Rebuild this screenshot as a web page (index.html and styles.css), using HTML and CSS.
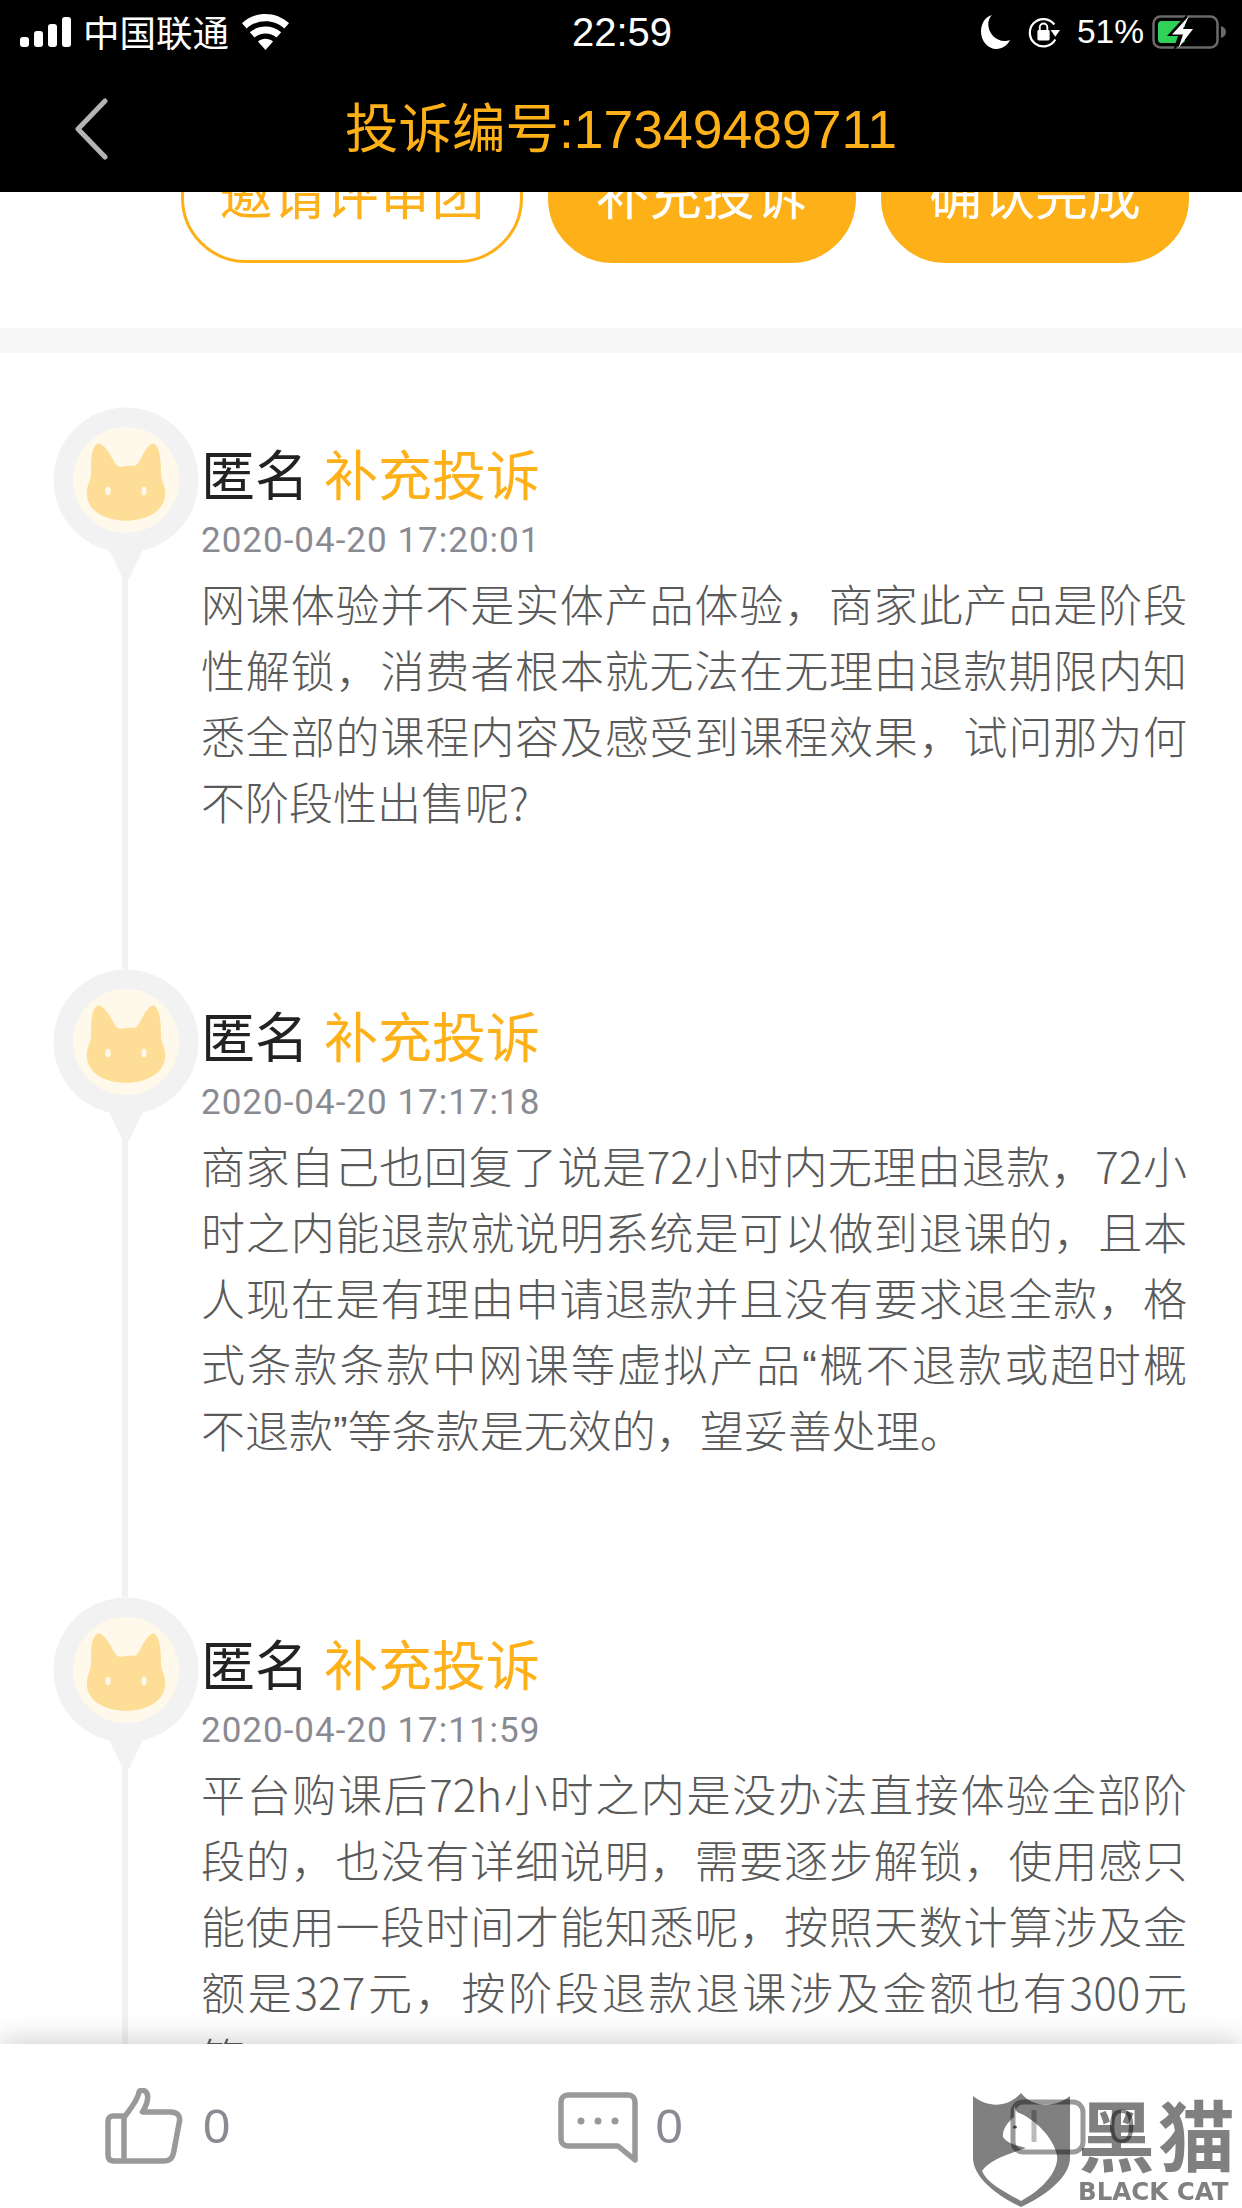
FILE: index.html
```html
<!DOCTYPE html>
<html lang="zh-CN">
<head>
  <meta charset="UTF-8">
  <meta name="viewport" content="width=device-width, initial-scale=1.0">
  <title>投诉详情</title>
  <link rel="stylesheet" href="styles.css">
</head>
<body>
  <svg class="defs" width="0" height="0">
    <symbol id="cat-pin" viewBox="0 0 146 172">
      <circle cx="73" cy="73" r="72.500" fill="#f2f2f2"/>
      <path d="M55 141L70 172h6l15-31z" fill="#f2f2f2"/>
      <circle cx="73" cy="73" r="53" fill="#fff9ec"/>
      <g transform="translate(73 75) scale(1.060) translate(-71 -73.500)">
        <path d="M45 37C50 38 54 44 58 51C61 57 63 59 66 59L76 58C80 59 82 57 85 51C89 44 92 38 97 37C103 40 104 52 104 66C104 72 108 76 108 84C108 100 92 110 71 110C50 110 34 100 34 84C34 76 38 72 38 66C38 52 38 40 45 37Z" fill="#fedd96"/>
        <ellipse cx="54" cy="82" rx="2.500" ry="4" fill="#fff9ec"/>
        <ellipse cx="88" cy="82" rx="2.500" ry="4" fill="#fff9ec"/>
      </g>
    </symbol>
  </svg>

  <div class="page">
    <header class="top">
      <div class="status-bar">
        <div class="status-left">
          <svg class="signal" width="52" height="30" viewBox="0 0 52 30">
            <rect x="0" y="20" width="9" height="10" rx="3"/>
            <rect x="14" y="14" width="9" height="16" rx="3"/>
            <rect x="28" y="7" width="9" height="23" rx="3"/>
            <rect x="42" y="0" width="9" height="30" rx="3"/>
          </svg>
          <span class="carrier">中国联通</span>
          <svg class="wifi" width="47" height="36" viewBox="0 0 47 36">
            <path d="M23.5 36l-7.5-8.5c4.200-3.600 10.800-3.600 15 0z"/>
            <path d="M12.500 23.500l-4.700-5.300c8.700-7.500 22.700-7.500 31.400 0l-4.700 5.300c-6.200-5.200-15.800-5.200-22 0z"/>
            <path d="M4.700 14.500L0 9.300c13-12.400 34-12.400 47 0l-4.700 5.200c-10.500-9.700-27.100-9.700-37.600 0z"/>
          </svg>
        </div>
        <div class="time">22:59</div>
        <div class="status-right">
          <svg width="29" height="34" viewBox="0 0 32 34" preserveAspectRatio="none">
            <path d="M12 0C4.500 2 0 8.700 0 16.500 0 26 7.500 34 17 34c6.500 0 12-3.500 15-9-2 .8-4 1-6 1C16 26 8 18 8 9c0-3 1.200-6.300 4-9z" fill="#fff"/>
          </svg>
          <svg class="lock" width="32" height="34" viewBox="0 0 34 34">
            <path d="M28 9A14.500 14.500 0 1 0 29 25" fill="none" stroke="#fff" stroke-width="2.400"/>
            <path d="M24 15h10l-5 7z" fill="#fff"/>
            <rect x="10" y="15" width="13" height="11" rx="1.500" fill="#fff"/>
            <path d="M12.500 15v-3a4 4 0 0 1 8 0v3" fill="none" stroke="#fff" stroke-width="2"/>
          </svg>
          <span class="battery-pct">51%</span>
          <svg width="75" height="34" viewBox="0 0 75 34">
            <rect x="1.500" y="1.500" width="64" height="31" rx="7" fill="none" stroke="#6a6a6a" stroke-width="2.500"/>
            <rect x="6" y="6" width="27" height="22" rx="3.500" fill="#30d158"/>
            <path d="M69 11c3 1 5 3 5 6s-2 5-5 6z" fill="#6a6a6a"/>
            <path d="M36 -2L15 21h11l-5 15 23-24H32z" fill="#000"/>
            <path d="M37 1L20 19.500h11L26.500 33 41 14H31z" fill="#fff"/>
          </svg>
        </div>
      </div>
      <div class="nav-bar">
        <svg class="back" width="35" height="62" viewBox="0 0 35 62">
          <path d="M31 3L4 31l27 28" fill="none" stroke="#b4b4b4" stroke-width="5" stroke-linecap="round" stroke-linejoin="round"/>
        </svg>
        <h1 class="nav-title">投诉编号:17349489711</h1>
      </div>
    </header>

    <main class="scroll-view">
      <div class="scroll-inner">
        <div class="actions">
          <button class="btn btn-outline">邀请评审团</button>
          <button class="btn btn-fill">补充投诉</button>
          <button class="btn btn-fill">确认完成</button>
        </div>
        <div class="divider"></div>

        <section class="timeline">
          <article class="entry">
            <div class="rail">
              <svg class="pin" width="146" height="172"><use href="#cat-pin"/></svg>
              <div class="rail-line"></div>
            </div>
            <div class="entry-body">
              <div class="entry-head">匿名 <span class="entry-type">补充投诉</span></div>
              <div class="entry-date">2020-04-20 17:20:01</div>
              <div class="entry-text">
                <span class="line">网课体验并不是实体产品体验，商家此产品是阶段</span>
                <span class="line">性解锁，消费者根本就无法在无理由退款期限内知</span>
                <span class="line">悉全部的课程内容及感受到课程效果，试问那为何</span>
                <span class="line line-end">不阶段性出售呢?</span>
              </div>
            </div>
          </article>

          <article class="entry">
            <div class="rail">
              <svg class="pin" width="146" height="172"><use href="#cat-pin"/></svg>
              <div class="rail-line"></div>
            </div>
            <div class="entry-body">
              <div class="entry-head">匿名 <span class="entry-type">补充投诉</span></div>
              <div class="entry-date">2020-04-20 17:17:18</div>
              <div class="entry-text">
                <span class="line">商家自己也回复了说是72小时内无理由退款，72小</span>
                <span class="line">时之内能退款就说明系统是可以做到退课的，且本</span>
                <span class="line">人现在是有理由申请退款并且没有要求退全款，格</span>
                <span class="line">式条款条款中网课等虚拟产品<span class="quote">“</span>概不退款或超时概</span>
                <span class="line line-end">不退款<span class="quote">”</span>等条款是无效的，望妥善处理。</span>
              </div>
            </div>
          </article>

          <article class="entry">
            <div class="rail">
              <svg class="pin" width="146" height="172"><use href="#cat-pin"/></svg>
              <div class="rail-line"></div>
            </div>
            <div class="entry-body">
              <div class="entry-head">匿名 <span class="entry-type">补充投诉</span></div>
              <div class="entry-date">2020-04-20 17:11:59</div>
              <div class="entry-text">
                <span class="line">平台购课后72h小时之内是没办法直接体验全部阶</span>
                <span class="line">段的，也没有详细说明，需要逐步解锁，使用感只</span>
                <span class="line">能使用一段时间才能知悉呢，按照天数计算涉及金</span>
                <span class="line">额是327元，按阶段退款退课涉及金额也有300元</span>
                <span class="line line-end">等</span>
              </div>
            </div>
          </article>
        </section>
      </div>
    </main>

    <footer class="bottom">
      <div class="stat">
        <svg width="80" height="76" viewBox="0 0 80 76">
          <path d="M3 33c0-3 2-5 5-5h12c6-8 13-16 14-24 .5-2.500 7-3 8.500 3 1 6-2 12-5 17h28c6 0 10 3 9 9l-6 32c-1 5-4 8-9 8H9c-4 0-6-2-6-6z" fill="none" stroke="#999" stroke-width="5.500" stroke-linejoin="round"/>
          <path d="M19 29v44" fill="none" stroke="#999" stroke-width="5.500"/>
        </svg>
        <span class="stat-num">0</span>
      </div>
      <div class="stat">
        <svg width="80" height="76" viewBox="0 -4 80 76">
          <path d="M10 3h60c4 0 7 3 7 7v58L60 54H10c-4 0-7-3-7-7V10c0-4 3-7 7-7z" fill="none" stroke="#999" stroke-width="5.500" stroke-linejoin="round"/>
          <circle cx="23" cy="29" r="3.500" fill="#999"/>
          <circle cx="40" cy="29" r="3.500" fill="#999"/>
          <circle cx="57" cy="29" r="3.500" fill="#999"/>
        </svg>
        <span class="stat-num">0</span>
      </div>
      <div class="stat">
        <svg width="80" height="76" viewBox="0 0 80 76">
          <rect x="3" y="14" width="70" height="50" rx="10" fill="none" stroke="#999" stroke-width="5"/>
          <path d="M24 22v32" fill="none" stroke="#bbb" stroke-width="5"/>
        </svg>
        <span class="stat-num">0</span>
      </div>
      <div class="watermark">
        <svg class="shield" width="97" height="114" viewBox="0 0 97 114">
          <path d="M0 3C15 15 35 15 48 0C60 15 82 15 97 3V65C97 85 70 104 48 114C26 104 0 85 0 65Z" fill="#808080"/>
          <path d="M41 13L44 19C62 26 80 44 84 62C86 78 70 96 48 108C30 98 14 90 9 78C18 66 34 62 53 55C44 52 36 52 30 44C29 36 36 28 41 24Z" fill="#fff"/>
          <ellipse cx="42" cy="34" rx="2" ry="1.500" fill="#555"/>
        </svg>
        <div class="wm-text">
          <div class="wm-cn">黑猫</div>
          <div class="wm-en">BLACK CAT</div>
        </div>
      </div>
    </footer>
  </div>
</body>
</html>
```

FILE: styles.css
```css
* {
  box-sizing: border-box;
}
body {
  margin: 0;
  font-family: "Noto Sans CJK SC", "Liberation Sans", sans-serif;
  background-color: #fff;
}
.defs {
  position: absolute;
}
.page {
  width: 1242px;
  height: 2208px;
  display: flex;
  flex-direction: column;
  overflow: hidden;
}

/* header */
.top {
  height: 192px;
  flex: none;
  background-color: #000;
  color: #fff;
  position: relative;
  z-index: 2;
}
.status-bar {
  height: 64px;
  padding: 0 15px 0 20px;
  display: grid;
  grid-template-columns: 1fr auto 1fr;
  align-items: center;
}
.status-left {
  display: flex;
  align-items: center;
}
.signal {
  fill: #fff;
  margin-right: 11px;
}
.carrier {
  font-size: 36.500px;
  line-height: 64px;
  width: 145px;
  white-space: nowrap;
}
.wifi {
  fill: #fff;
  margin-left: 14px;
}
.time {
  font-family: "Liberation Sans", sans-serif;
  font-size: 40px;
  margin-right: 3px;
}
.status-right {
  display: flex;
  align-items: center;
  justify-content: flex-end;
}
.lock {
  margin-left: 18px;
}
.battery-pct {
  font-family: "Liberation Sans", sans-serif;
  font-size: 33.500px;
  margin: 0 8px 0 17px;
}
.nav-bar {
  height: 128px;
  padding-bottom: 8px;
  display: flex;
  align-items: center;
  justify-content: center;
  position: relative;
}
.back {
  position: absolute;
  left: 74px;
  top: 34px;
}
.nav-title {
  margin: 0;
  font-family: "Liberation Sans", "Noto Sans CJK SC", sans-serif;
  font-size: 53.500px;
  font-weight: 400;
  color: #fdb018;
  white-space: nowrap;
}

/* content, shown scrolled a little */
.scroll-view {
  flex: 1;
  min-height: 0;
  overflow: hidden;
  position: relative;
}
.scroll-inner {
  margin-top: -59px;
}
.actions {
  display: flex;
  justify-content: flex-end;
  gap: 25px;
  padding-right: 53px;
}
.btn {
  width: 308px;
  height: 130px;
  border-radius: 65px;
  border: 3px solid #fdb018;
  font-family: inherit;
  font-size: 53px;
  background-color: #fdb018;
  color: #fff;
  padding: 0 0 12px;
  white-space: nowrap;
}
.btn-outline {
  width: 342px;
  background-color: #fff;
  color: #fdb018;
}
.divider {
  height: 25px;
  margin-top: 65px;
  background-color: #f7f7f7;
}
.timeline {
  padding: 54px 0 0 53px;
}
.entry {
  display: flex;
}
.rail {
  width: 146px;
  flex: none;
  display: flex;
  flex-direction: column;
  align-items: center;
}
.pin {
  display: block;
  flex: none;
}
.rail-line {
  width: 6px;
  flex: 1;
  margin-right: 2px;
  background-color: #f2f2f2;
}
.entry-body {
  width: 990px;
  padding: 36px 0 135px 2px;
}
.entry-head {
  font-size: 54px;
  line-height: 60px;
  word-spacing: 3px;
  color: #222;
  white-space: nowrap;
}
.entry-type {
  color: #fdb018;
}
.entry-date {
  font-family: Roboto, sans-serif;
  font-size: 35px;
  line-height: 40px;
  margin-top: 18px;
  color: #8a8a92;
  letter-spacing: 1px;
}
.entry-text {
  margin-top: 9px;
  width: 986px;
  font-size: 44px;
  font-weight: 300;
  line-height: 66px;
  color: #5a5a5a;
}
.line {
  display: block;
  text-align: justify;
  text-align-last: justify;
}
.line-end {
  text-align-last: left;
}
.quote {
  font-family: "Liberation Sans", sans-serif;
  line-height: 1;
}

/* bottom bar */
.bottom {
  height: 164px;
  flex: none;
  background-color: #fff;
  display: grid;
  grid-template-columns: repeat(3, 452.500px);
  padding-left: 105px;
  position: relative;
  z-index: 1;
  box-shadow: 0 -6px 24px rgba(0, 0, 0, 0.16);
}
.stat {
  display: flex;
  align-items: center;
  gap: 18px;
}
.stat-num {
  font-family: "Liberation Sans", sans-serif;
  font-size: 49px;
  color: #8a8a92;
}
.watermark {
  position: absolute;
  left: 973px;
  top: 49px;
  width: 269px;
  display: flex;
  gap: 8px;
  mix-blend-mode: multiply;
}
.shield {
  flex: none;
}
.wm-text {
  color: #808080;
  padding-top: 2px;
}
.wm-cn {
  font-size: 77px;
  line-height: 76px;
  font-weight: 700;
  letter-spacing: 3px;
  white-space: nowrap;
}
.wm-en {
  font-family: "DejaVu Sans", sans-serif;
  font-size: 24.500px;
  line-height: 26px;
  font-weight: 700;
  margin-top: 8px;
  white-space: nowrap;
}
```
